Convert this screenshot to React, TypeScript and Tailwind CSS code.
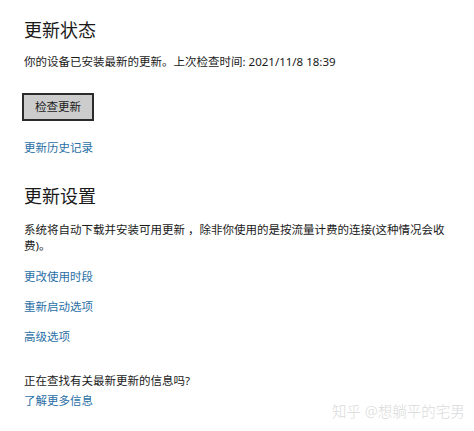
export default function App() {
  return (
    <main
      className="relative w-[474px] h-[431px] bg-white overflow-hidden text-[#1a1a1a]"
      style={{ fontFamily: '"Noto Sans", "Noto Sans CJK SC", sans-serif' }}
    >
      <div className="flex flex-col items-start pl-6 pt-[18px] w-[460px]">
        <h1 className="text-[18px] leading-[24px] font-normal">更新状态</h1>
        <p className="mt-3 text-[11.5px] leading-4">你的设备已安装最新的更新。上次检查时间: 2021/11/8 18:39</p>
        <button className="mt-[23px] -ml-0.5 w-[72px] h-[28px] border-2 border-[#2b2b2b] bg-[#cccccc] text-[11.5px] text-[#1a1a1a]">
          检查更新
        </button>
        <a className="mt-[19px] text-[11.5px] leading-4 text-[#2a6fa5]">更新历史记录</a>

        <h2 className="mt-7 text-[18px] leading-[24px] font-normal">更新设置</h2>
        <p className="mt-[14px] text-[11.5px] leading-4">
          系统将自动下载并安装可用更新 ，除非你使用的是按流量计费的连接(这种情况会收
          <br />
          费)。
        </p>
        <a className="mt-[15px] text-[11.5px] leading-4 text-[#2a6fa5]">更改使用时段</a>
        <a className="mt-[14px] text-[11.5px] leading-4 text-[#2a6fa5]">重新启动选项</a>
        <a className="mt-[14px] text-[11.5px] leading-4 text-[#2a6fa5]">高级选项</a>

        <p className="mt-7 text-[11.5px] leading-4">正在查找有关最新更新的信息吗?</p>
        <a className="mt-1 text-[11.5px] leading-4 text-[#2a6fa5]">了解更多信息</a>
      </div>
      <div className="absolute left-[332px] top-[401px] text-[14.5px] leading-[20px] text-[#dadada] font-light whitespace-nowrap">
        知乎 @想躺平的宅男
      </div>
    </main>
  );
}
